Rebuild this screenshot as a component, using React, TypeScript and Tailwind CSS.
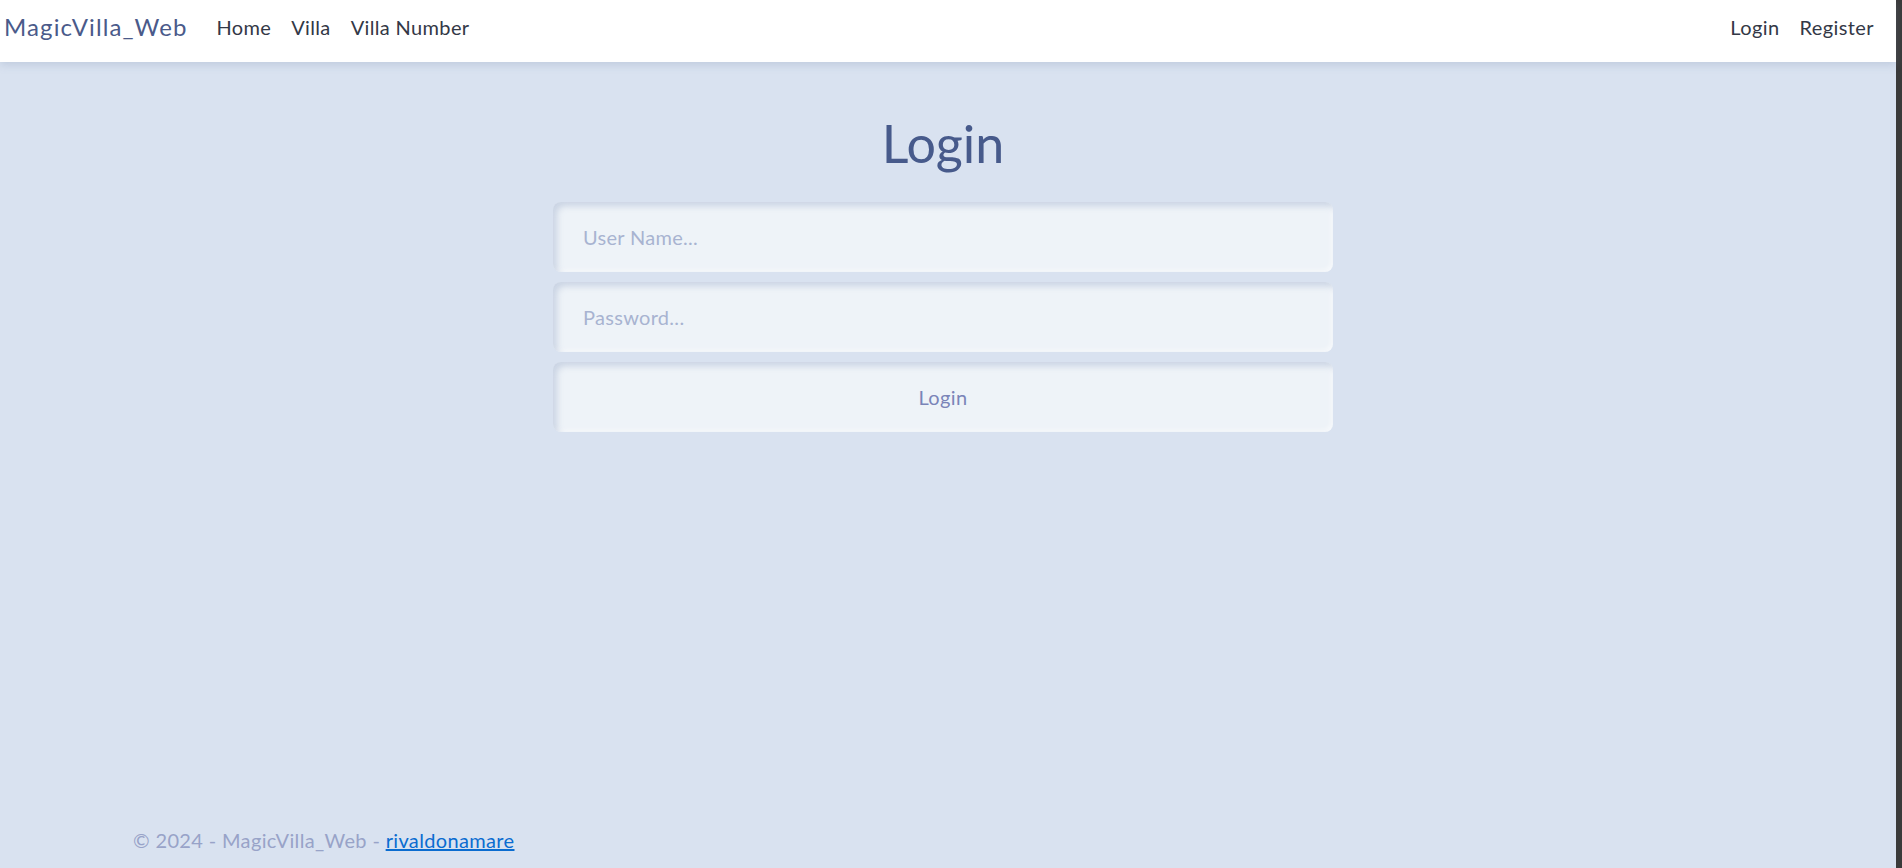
export default function App() {
  const font = { fontFamily: "Lato, 'Open Sans', sans-serif" }
  const field =
    "h-[70px] w-full rounded-[8px] bg-[#eef3f8] px-[30px] text-[20px] tracking-[0.3px] text-[#4a5a8a] placeholder:text-[#a8b3d1] outline-none shadow-[inset_4px_4px_6px_rgba(160,175,205,0.45),inset_-2px_-2px_4px_rgba(255,255,255,0.6)]"
  return (
    <div className="flex h-[868px] w-full bg-[#3a3a3a]" style={font}>
      <div className="flex flex-col w-[1896px] bg-[#d9e2f0] h-full">
        {/* Navbar */}
        <header className="h-[62px] bg-white flex items-start pt-[13px] shadow-[0_3px_8px_rgba(120,140,170,0.25)] relative z-10">
          <a className="ml-[4px] text-[24px] leading-[28px] text-[#4a5a8a] mr-[29px] tracking-[1.1px]">MagicVilla_Web</a>
          <nav className="flex gap-[20px] text-[20px] leading-[28px] tracking-[0.35px] text-[#333846]">
            <a>Home</a>
            <a>Villa</a>
            <a>Villa Number</a>
          </nav>
          <nav className="ml-auto mr-[22px] flex gap-[20px] text-[20px] leading-[28px] tracking-[0.4px] text-[#333846]">
            <a>Login</a>
            <a>Register</a>
          </nav>
        </header>

        {/* Main */}
        <main className="flex-1 pr-[10px]">
          <div className="w-[780px] mx-auto">
            <h1 className="text-center text-[52px] leading-none text-[#475a8b] mt-[55px] mb-[33px]">Login</h1>
            <div className="flex flex-col gap-[10px]">
              <input placeholder="User Name..." className={field} />
              <input type="password" placeholder="Password..." className={field} />
              <button className="h-[70px] w-full rounded-[8px] bg-[#eef3f8] text-[20px] tracking-[0.4px] text-[#7a84b8] shadow-[inset_4px_4px_6px_rgba(160,175,205,0.45),inset_-2px_-2px_4px_rgba(255,255,255,0.6)]">
                Login
              </button>
            </div>
          </div>
        </main>

        {/* Footer */}
        <footer className="h-[42px] pl-[133px] text-[20px] leading-[28px] tracking-[0.35px] text-[#98a3c8]">
          © 2024 - MagicVilla_Web - <a className="text-[#0a6cd0] underline">rivaldonamare</a>
        </footer>
      </div>
    </div>
  )
}
